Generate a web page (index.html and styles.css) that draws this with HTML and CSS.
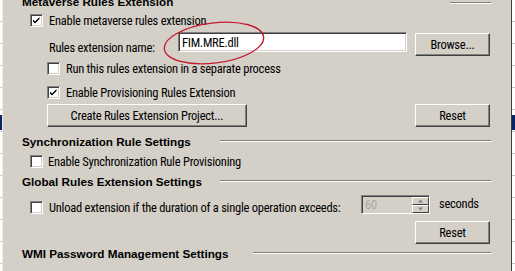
FILE: index.html
```html
<!DOCTYPE html>
<html lang="en">
<head>
<meta charset="utf-8">
<title>Metaverse Rules Extension</title>
<link rel="stylesheet" href="styles.css">
</head>
<body>
<div class="screen">
  <div class="edge edge-left"></div>
  <div class="panel">
    <div class="header h-meta"><span class="title">Metaverse Rules Extension</span><span class="rule"></span></div>

    <div class="row r1 indent1">
      <span class="check on"><svg viewBox="0 0 11 11" width="11" height="11"><path d="M2 4.5 L4 6.5 L8.5 2 L8.5 4 L4 8.5 L2 6.5 Z" fill="#000"/></svg></span>
      <span class="label">Enable metaverse rules extension</span>
    </div>

    <div class="row r2">
      <span class="label name-label">Rules extension name:</span>
      <span class="textbox">FIM.MRE.dll</span>
      <span class="btn btn-browse">Browse...</span>
    </div>

    <div class="row r3 indent2">
      <span class="check"></span>
      <span class="label">Run this rules extension in a separate process</span>
    </div>

    <div class="row r4 indent2">
      <span class="check on"><svg viewBox="0 0 11 11" width="11" height="11"><path d="M2 4.5 L4 6.5 L8.5 2 L8.5 4 L4 8.5 L2 6.5 Z" fill="#000"/></svg></span>
      <span class="label">Enable Provisioning Rules Extension</span>
    </div>

    <div class="row r5 btnrow">
      <span class="btn btn-create">Create Rules Extension Project...</span>
      <span class="btn btn-reset">Reset</span>
    </div>

    <div class="header h-sync"><span class="title">Synchronization Rule Settings</span><span class="rule"></span></div>

    <div class="row r7 indent1">
      <span class="check"></span>
      <span class="label">Enable Synchronization Rule Provisioning</span>
    </div>

    <div class="header h-global"><span class="title">Global Rules Extension Settings</span><span class="rule"></span></div>

    <div class="row r9">
      <span class="check"></span>
      <span class="label unload">Unload extension if the duration of a single operation exceeds:</span>
      <span class="spinner">
        <span class="spin-value">60</span>
        <span class="spin-btns">
          <span class="spin-btn"><svg viewBox="0 0 7 4" width="7" height="4"><path d="M3.5 0.5 L6 3.5 L1 3.5 Z" fill="#808080"/></svg></span>
          <span class="spin-btn"><svg viewBox="0 0 7 4" width="7" height="4"><path d="M1 0.5 L6 0.5 L3.5 3.5 Z" fill="#808080"/></svg></span>
        </span>
      </span>
      <span class="label seconds">seconds</span>
    </div>

    <div class="row r10 btnrow">
      <span class="btn btn-reset">Reset</span>
    </div>

    <div class="header h-wmi"><span class="title">WMI Password Management Settings</span><span class="rule"></span></div>
  </div>
  <div class="divider"></div>
  <div class="edge edge-right"></div>

  <svg class="annotation" viewBox="0 0 130 60" width="130" height="60">
    <ellipse cx="64" cy="28" rx="50" ry="20" transform="rotate(-7 64 28)" fill="none" stroke="#c4182c" stroke-width="1.3"/>
    <path d="M96 9 C104 11 111 15 113 20" fill="none" stroke="#c4182c" stroke-width="1.1" stroke-linecap="round"/>
  </svg>
</div>
</body>
</html>
```

FILE: styles.css
```css
html, body {
  margin: 0;
  padding: 0;
  background: #d4d0c8;
}

.screen {
  position: relative;
  display: flex;
  width: 515px;
  height: 271px;
  overflow: hidden;
  background: #d4d0c8;
}

.edge {
  width: 3px;
  flex: none;
  background:
    linear-gradient(to bottom, transparent 115px, #0a246a 115px, #0a246a 130px, transparent 130px),
    repeating-linear-gradient(to bottom, #ffffff 0, #ffffff 21px, #c4c4c4 21px, #c4c4c4 22px);
}

.edge-left {
  border-right: 1px solid #ece9e2;
  width: 2px;
}

.divider {
  width: 1px;
  flex: none;
  background: #404040;
}

.panel {
  width: 508px;
  flex: none;
  display: flex;
  flex-direction: column;
  font-family: Roboto, "Liberation Sans", Arial, sans-serif;
  font-stretch: 75%;
  font-size: 12.5px;
  letter-spacing: -0.25px;
  color: #000;
}

/* group headers */
.header {
  display: flex;
  align-items: flex-start;
  height: 14px;
  padding-left: 19px;
  padding-right: 19px;
  flex: none;
}

.title {
  font-family: "Liberation Sans", Arial, sans-serif;
  font-stretch: normal;
  letter-spacing: 0;
  font-weight: bold;
  font-size: 11.7px;
  line-height: 14px;
  white-space: nowrap;
  flex: none;
}

.rule {
  flex: 1;
  height: 0;
  margin-top: 5px;
  border-top: 1px solid #808080;
  border-bottom: 1px solid #ffffff;
  border-right: 1px solid #ffffff;
}

.h-meta { margin-top: -5px; }
.h-meta .title { width: 428px; }
.h-meta .rule { margin-top: 7px; }

.h-sync { margin-top: 8px; }
.h-sync .title { width: 198px; }

.h-global { margin-top: 7px; }
.h-global .title { width: 198px; }

.h-wmi { margin-top: 3px; }
.h-wmi .title { width: 231px; }

/* rows */
.row {
  display: flex;
  align-items: center;
  flex: none;
}

.label {
  line-height: 13px;
  white-space: nowrap;
}

.indent1 { padding-left: 27px; }
.indent1 .label { margin-left: 6px; }

.indent2 { padding-left: 44px; }
.indent2 .label { margin-left: 6px; }

.r1 { margin-top: 5px; height: 13px; }
.r3 { margin-top: 6px; height: 13px; }
.r4 { margin-top: 11px; height: 13px; }
.r7 { margin-top: 6px; height: 13px; }
.r7 .label { margin-left: 5px; }

/* checkbox */
.check {
  box-sizing: border-box;
  width: 13px;
  height: 13px;
  flex: none;
  background: #ffffff;
  border: 1px solid;
  border-color: #808080 #ffffff #ffffff #808080;
  box-shadow: inset 1px 1px 0 #404040, inset -1px -1px 0 #d4d0c8;
  display: flex;
  align-items: center;
  justify-content: center;
}

.check svg { display: block; }

/* rules name row */
.r2 {
  margin-top: 5px;
  height: 24px;
  align-items: flex-start;
  padding-left: 46px;
}

.name-label {
  width: 129px;
  margin-top: 9px;
  flex: none;
}

.textbox {
  box-sizing: border-box;
  width: 229px;
  height: 20px;
  flex: none;
  background: #ffffff;
  border: 1px solid;
  border-color: #808080 #ffffff #ffffff #808080;
  box-shadow: inset 1px 1px 0 #404040, inset -1px -1px 0 #d4d0c8;
  padding-left: 3px;
  display: flex;
  align-items: center;
  line-height: 13px;
}

/* buttons */
.btn {
  box-sizing: border-box;
  height: 23px;
  flex: none;
  background: #d4d0c8;
  border: 1px solid;
  border-color: #ffffff #404040 #404040 #ffffff;
  box-shadow: inset -1px -1px 0 #808080;
  display: flex;
  align-items: center;
  justify-content: center;
  line-height: 13px;
  white-space: nowrap;
}

.btn-browse {
  width: 75px;
  margin-left: 8px;
  margin-top: 1px;
}

.btnrow {
  height: 23px;
  padding-left: 44px;
  padding-right: 21px;
}

.r5 { margin-top: 5px; }

.btn-create { width: 200px; }

.btn-reset {
  width: 75px;
  margin-left: auto;
}

.r10 { margin-top: 7px; }

/* unload row */
.r9 {
  margin-top: 6px;
  height: 19px;
  align-items: flex-start;
  padding-left: 27px;
}

.r9 .check { margin-top: 6px; }

.unload {
  margin-left: 6px;
  margin-top: 6px;
}

.spinner {
  box-sizing: border-box;
  width: 69px;
  height: 19px;
  flex: none;
  margin-left: auto;
  display: flex;
  background: #d4d0c8;
  border: 1px solid;
  border-color: #808080 #ffffff #ffffff #808080;
  box-shadow: inset 1px 1px 0 #404040;
}

.spin-value {
  flex: 1;
  color: #a8a6a0;
  padding-left: 3px;
  padding-top: 1px;
  line-height: 15px;
}

.spin-btns {
  width: 17px;
  display: flex;
  flex-direction: column;
  padding: 1px 0 0 0;
}

.spin-btn {
  box-sizing: border-box;
  flex: 1;
  background: #d4d0c8;
  border: 1px solid;
  border-color: #ffffff #404040 #404040 #ffffff;
  display: flex;
  align-items: center;
  justify-content: center;
}

.spin-btn svg { display: block; }

.seconds {
  width: 72px;
  margin-left: 9px;
  margin-top: 2px;
  flex: none;
}

/* red hand-drawn annotation over the name field */
.annotation {
  position: absolute;
  left: 150px;
  top: 15px;
  pointer-events: none;
}
```
